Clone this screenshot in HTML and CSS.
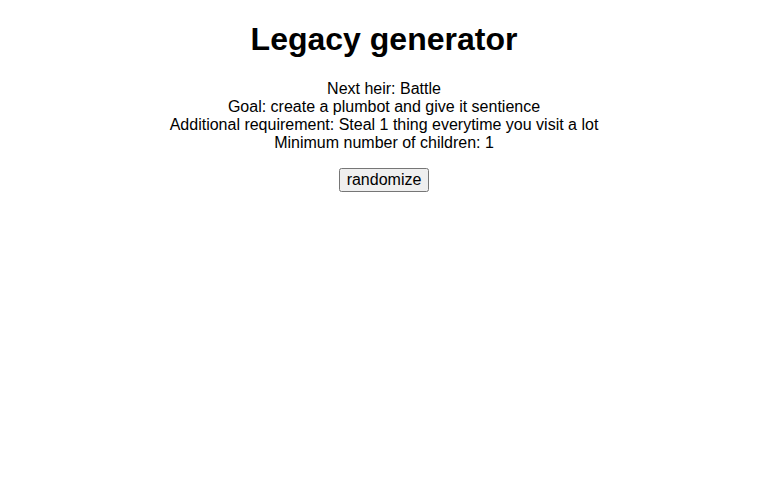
FILE: index.html
```html
<!DOCTYPE html>
<html lang="en">
<head>
    <meta charset="UTF-8">
    <meta name="viewport" content="width=device-width, initial-scale=1.0">
    <title>Legacy generator</title>
    <link rel="stylesheet" href="styles.css">
</head>
<body>
    <div class="app">
        <h1>Legacy generator</h1>
        <div class="rules">
            <div>Next heir: Battle</div>
            <div>Goal: create a plumbot and give it sentience</div>
            <div>Additional requirement: Steal 1 thing everytime you visit a lot</div>
            <div>Minimum number of children: 1</div>
        </div>
        <button class="roll">randomize</button>
    </div>
</body>
</html>
```

FILE: styles.css
```css
body {
    font-family: 'Liberation Sans', Arial, sans-serif;
    margin: 0;
    background: white;
    color: black;
}
.app {
    text-align: center;
    padding-top: 21px;
}
h1 {
    font-size: 32px;
    margin: 0 0 22px;
}
.rules {
    font-size: 16px;
    line-height: 18px;
}
.roll {
    font-family: 'Liberation Sans', Arial, sans-serif;
    font-size: 16px;
    margin-top: 16px;
    padding: 1px 6px;
}
```
